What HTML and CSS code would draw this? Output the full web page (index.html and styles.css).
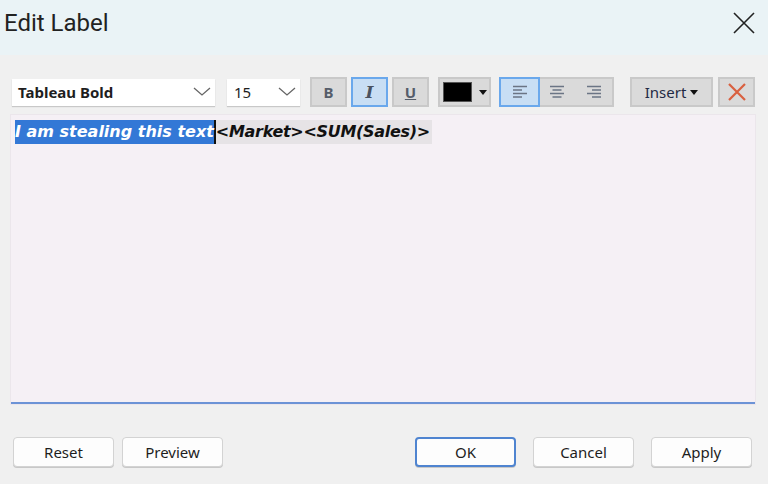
FILE: index.html
```html
<!DOCTYPE html>
<html lang="en">
<head>
  <meta charset="UTF-8">
  <title>Edit Label</title>
  <link rel="stylesheet" href="styles.css">
</head>
<body>
  <div class="titlebar">
    <span class="title">Edit Label</span>
    <svg class="close" width="22" height="22" viewBox="0 0 22 22">
      <path d="M1 1 L21 21 M21 1 L1 21" stroke="#222" stroke-width="1.6" fill="none"/>
    </svg>
  </div>

  <div class="toolbar">
    <div class="select font-select">
      <span>Tableau Bold</span>
      <svg width="18" height="10" viewBox="0 0 18 10"><path d="M1 1 L9 8 L17 1" stroke="#666" stroke-width="1.3" fill="none"/></svg>
    </div>
    <div class="select size-select">
      <span>15</span>
      <svg width="18" height="10" viewBox="0 0 18 10"><path d="M1 1 L9 8 L17 1" stroke="#666" stroke-width="1.3" fill="none"/></svg>
    </div>

    <div class="btn-group styles">
      <div class="tbtn bold">B</div>
      <div class="tbtn italic active">I</div>
      <div class="tbtn underline">U</div>
    </div>

    <div class="tbtn color-btn">
      <span class="swatch"></span>
      <span class="caret"></span>
    </div>

    <div class="align-group">
      <div class="abtn active">
        <svg width="16" height="14" viewBox="0 0 16 14"><path d="M1 1.5 H15 M1 5 H10 M1 8.5 H15 M1 12 H10" stroke="#6b7585" stroke-width="1.5"/></svg>
      </div>
      <div class="abtn">
        <svg width="16" height="14" viewBox="0 0 16 14"><path d="M1 1.5 H15 M3.5 5 H12.5 M1 8.5 H15 M3.5 12 H12.5" stroke="#6b7585" stroke-width="1.5"/></svg>
      </div>
      <div class="abtn">
        <svg width="16" height="14" viewBox="0 0 16 14"><path d="M1 1.5 H15 M6 5 H15 M1 8.5 H15 M6 12 H15" stroke="#6b7585" stroke-width="1.5"/></svg>
      </div>
    </div>

    <div class="tbtn insert-btn">Insert <span class="caret"></span></div>
    <div class="tbtn clear-btn">
      <svg width="20" height="20" viewBox="0 0 20 20"><path d="M2 2 L18 18 M18 2 L2 18" stroke="#d9603f" stroke-width="2.2" fill="none"/></svg>
    </div>
  </div>

  <div class="editor">
    <div class="line"><span class="selected">I am stealing this text</span><span class="fields">&lt;Market&gt;&lt;SUM(Sales)&gt;</span></div>
  </div>

  <div class="footer">
    <div class="left">
      <button class="dbtn">Reset</button>
      <button class="dbtn">Preview</button>
    </div>
    <div class="right">
      <button class="dbtn primary">OK</button>
      <button class="dbtn">Cancel</button>
      <button class="dbtn">Apply</button>
    </div>
  </div>
</body>
</html>
```

FILE: styles.css
```css
body {
  margin: 0;
  width: 768px;
  height: 484px;
  overflow: hidden;
  background-color: #f0f0f0;
  font-family: "Noto Sans", "Open Sans", sans-serif;
  color: #1e1e1e;
}

.titlebar {
  height: 55px;
  background-color: #eaf3f6;
  display: flex;
  align-items: center;
  justify-content: space-between;
  padding: 0 13px 0 4px;
}

.title {
  font-family: "Liberation Sans Narrow", "Roboto", sans-serif;
  font-size: 24px;
  color: #222;
  margin-top: -10px;
}

.close {
  margin-top: -10px;
}

.toolbar {
  display: flex;
  align-items: center;
  height: 30px;
  margin: 22px 0 0 12px;
}

.select {
  height: 27px;
  background-color: #fff;
  box-shadow: 0 1px 1px #c8c8c8;
  display: flex;
  align-items: center;
  justify-content: space-between;
  padding: 0 4px 0 6px;
  box-sizing: border-box;
  font-size: 15px;
  font-weight: bold;
}

.font-select {
  width: 203px;
}

.size-select {
  width: 73px;
  margin-left: 12px;
  font-weight: normal;
  padding-left: 7px;
}

.btn-group {
  display: flex;
  gap: 4px;
  margin-left: 10px;
}

.tbtn {
  height: 30px;
  box-sizing: border-box;
  border: 2px solid #c9c9c9;
  background-color: #dadada;
  display: flex;
  align-items: center;
  justify-content: center;
  color: #555d6a;
  font-size: 15px;
}

.btn-group .tbtn {
  width: 37px;
}

.tbtn.active {
  background-color: #c8def4;
  border-color: #6aa8ec;
}

.bold {
  font-weight: bold;
}

.italic {
  font-family: "DejaVu Serif", serif;
  font-style: italic;
  font-weight: bold;
  font-size: 17px;
  color: #4a5260;
}

.underline {
  text-decoration: underline;
  font-weight: bold;
}

.color-btn {
  width: 53px;
  margin-left: 9px;
  justify-content: flex-start;
  padding-left: 3px;
}

.swatch {
  width: 29px;
  height: 20px;
  background-color: #000;
  border: 1px solid #555;
  box-sizing: border-box;
}

.caret {
  display: inline-block;
  width: 0;
  height: 0;
  border-left: 4px solid transparent;
  border-right: 4px solid transparent;
  border-top: 5px solid #111;
}

.color-btn .caret {
  margin-left: 7px;
}

.align-group {
  display: flex;
  margin-left: 8px;
  border: 2px solid #c9c9c9;
  background-color: #dadada;
  height: 30px;
  box-sizing: border-box;
}

.abtn {
  width: 37px;
  display: flex;
  align-items: center;
  justify-content: center;
}

.abtn.active {
  background-color: #c8def4;
  box-shadow: 0 0 0 2px #6aa8ec;
}

.insert-btn {
  width: 83px;
  margin-left: 16px;
  font-size: 15px;
  color: #1f2a44;
  gap: 4px;
}

.clear-btn {
  width: 37px;
  margin-left: 5px;
}

.editor {
  margin: 8px 13px 0 11px;
  height: 289px;
  background-color: #f5f0f5;
  border-bottom: 2px solid #6c93d6;
  box-shadow: 0 0 0 1px #ebe6eb;
  padding: 5px 4px;
  box-sizing: border-box;
}

.line {
  font-family: "DejaVu Sans", "Noto Sans", sans-serif;
  font-weight: bold;
  font-style: italic;
  font-size: 16px;
  line-height: 24px;
  display: flex;
}

.selected {
  background-color: #3378d6;
  color: #fff;
  border-right: 2px solid #111;
}

.fields {
  background-color: #e6e3e6;
  color: #111;
  letter-spacing: -0.3px;
  padding-right: 2px;
}

.footer {
  display: flex;
  justify-content: space-between;
  margin: 33px 16px 0 13px;
}

.left, .right {
  display: flex;
  gap: 8px;
}

.right {
  gap: 17px;
}

.dbtn {
  width: 101px;
  height: 30px;
  background-color: #fdfdfd;
  border: 1px solid #d3d3d3;
  border-radius: 4px;
  box-shadow: 0 1px 0 #c8c8c8;
  font-family: "Noto Sans", "Open Sans", sans-serif;
  font-size: 15px;
  color: #1e1e1e;
  padding: 0;
}

.dbtn.primary {
  border: 2px solid #4f84d0;
}
```
